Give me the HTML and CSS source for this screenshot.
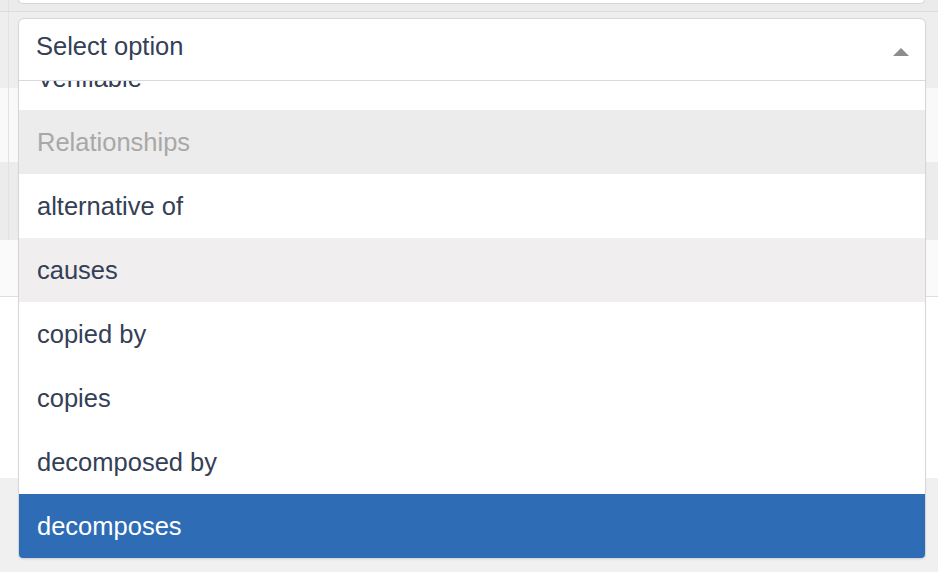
FILE: index.html
```html
<!DOCTYPE html>
<html>
<head>
<meta charset="utf-8">
<link rel="stylesheet" href="styles.css">
</head>
<body>
<div class="page">
  <div class="bg">
    <div class="band band-top"><span class="col"></span><span class="top-input"></span></div>
    <div class="band band-a"><span class="col"></span></div>
    <div class="band band-b"><span class="col"></span></div>
    <div class="band band-c"><span class="col"></span></div>
    <div class="band band-d"></div>
    <div class="band band-e"></div>
    <div class="band band-f"></div>
  </div>

  <div class="select">
    <div class="select-head">
      <span class="placeholder">Select option</span>
      <span class="arrow"></span>
    </div>
    <div class="list">
      <div class="opt opt-first">Verifiable</div>
      <div class="opt group">Relationships</div>
      <div class="opt">alternative of</div>
      <div class="opt hover">causes</div>
      <div class="opt">copied by</div>
      <div class="opt">copies</div>
      <div class="opt">decomposed by</div>
      <div class="opt active">decomposes</div>
    </div>
  </div>
</div>
</body>
</html>
```

FILE: styles.css
```css
html, body {
  margin: 0;
  padding: 0;
}
body {
  font-family: "Liberation Sans", Arial, Helvetica, sans-serif;
  background: #f0f0f0;
}
.page {
  position: relative;
  width: 938px;
  height: 572px;
  overflow: hidden;
}
.bg {
  display: flex;
  flex-direction: column;
}
.band {
  display: flex;
  box-sizing: border-box;
}
.col {
  width: 9px;
  border-right: 1px solid #e2e2e2;
  box-sizing: border-box;
}
.band-top {
  height: 12px;
  background: #ebebeb;
  border-bottom: 1px solid #dcdcdc;
}
.top-input {
  margin-left: 9px;
  width: 907px;
  height: 5px;
  margin-top: -1px;
  background: #fff;
  border: 1px solid #d4d4d4;
  border-top: none;
  border-radius: 0 0 6px 6px;
  box-sizing: border-box;
}
.band-a {
  height: 76px;
  background: #eeeeee;
}
.band-b {
  height: 74px;
  background: #f9f9f9;
}
.band-c {
  height: 78px;
  background: #ececec;
}
.band-d {
  height: 57px;
  background: #fafafa;
  border-bottom: 1px solid #dedede;
}
.band-e {
  height: 181px;
  background: #fff;
}
.band-f {
  height: 94px;
  background: #f0f0f0;
}

.select {
  position: absolute;
  left: 18px;
  top: 18px;
  width: 908px;
  border: 1px solid #d6d6d6;
  border-radius: 6px 6px 5px 5px;
  background: #fff;
  box-sizing: border-box;
  overflow: hidden;
  box-shadow: 0 1px 2px rgba(0, 0, 0, 0.06);
}
.select-head {
  height: 62px;
  display: flex;
  align-items: center;
  justify-content: space-between;
  padding: 0 16px 0 17px;
  border-bottom: 1px solid #d9d9d9;
  box-sizing: border-box;
}
.placeholder {
  font-size: 25.5px;
  color: #344055;
  padding-bottom: 6px;
}
.arrow {
  width: 0;
  height: 0;
  border-left: 8px solid transparent;
  border-right: 8px solid transparent;
  border-bottom: 8px solid #8c8c8c;
  margin-top: 4px;
}
.list {
  height: 477px;
  overflow: hidden;
}
.opt {
  height: 64px;
  display: flex;
  align-items: center;
  padding-left: 18px;
  font-size: 25.5px;
  color: #344055;
  box-sizing: border-box;
}
.opt-first {
  margin-top: -35px;
}
.group {
  background: #ececec;
  color: #a8a8a8;
}
.hover {
  background: #f0eeef;
}
.active {
  background: #2e6cb5;
  color: #fff;
}
```
